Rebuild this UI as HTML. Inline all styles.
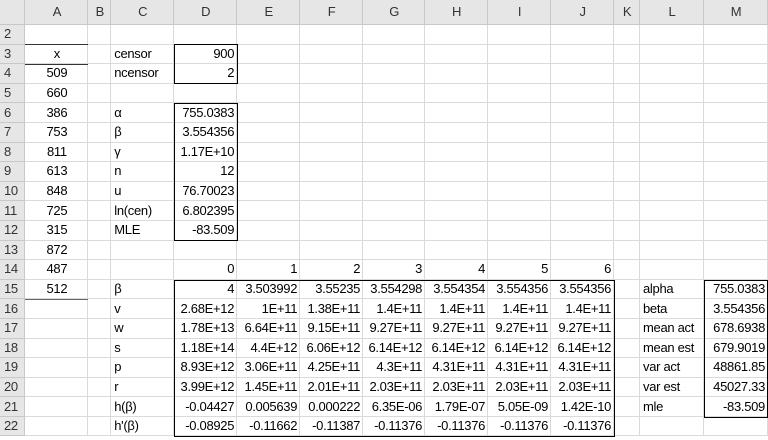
<!DOCTYPE html>
<html><head><meta charset="utf-8"><style>
body{margin:0;width:768px;height:440px;overflow:hidden;background:#fff;font-family:"Liberation Sans",sans-serif;font-size:13px;letter-spacing:-0.3px;color:#000;position:relative}
table{border-collapse:collapse;table-layout:fixed;position:absolute;left:0;top:0}
td{border-right:1px solid #dadada;border-bottom:1px solid #dadada;padding:0 2px 0 3px;white-space:nowrap;overflow:hidden;height:18.6px;line-height:18px;text-align:right}
tr.h td{background:#e6e6e6;color:#333;text-align:center;height:24px;border-right:1px solid #c8c8c8;border-bottom:1px solid #c8c8c8;font-size:13px}
td.r{background:#e6e6e6;color:#333;text-align:left;padding-left:4px;border-right:1px solid #c8c8c8;border-bottom:1px solid #c8c8c8}
td.c{text-align:center}
td.l{text-align:left}
.b{position:absolute;border:1px solid #000;box-sizing:border-box}
.ln{position:absolute;height:1px;background:#333}
</style></head><body>
<table>
<colgroup><col style="width:25px"><col style="width:63px"><col style="width:23px"><col style="width:63px"><col style="width:63px"><col style="width:63px"><col style="width:63px"><col style="width:62px"><col style="width:63px"><col style="width:63px"><col style="width:63px"><col style="width:26px"><col style="width:64px"><col style="width:64px"></colgroup>
<tr class="h"><td></td><td>A</td><td>B</td><td>C</td><td>D</td><td>E</td><td>F</td><td>G</td><td>H</td><td>I</td><td>J</td><td>K</td><td>L</td><td>M</td></tr>
<tr><td class="r">2</td><td></td><td></td><td></td><td></td><td></td><td></td><td></td><td></td><td></td><td></td><td></td><td></td><td></td></tr>
<tr><td class="r">3</td><td class="c">x</td><td></td><td class="l">censor</td><td>900</td><td></td><td></td><td></td><td></td><td></td><td></td><td></td><td></td><td></td></tr>
<tr><td class="r">4</td><td class="c">509</td><td></td><td class="l">ncensor</td><td>2</td><td></td><td></td><td></td><td></td><td></td><td></td><td></td><td></td><td></td></tr>
<tr><td class="r">5</td><td class="c">660</td><td></td><td></td><td></td><td></td><td></td><td></td><td></td><td></td><td></td><td></td><td></td><td></td></tr>
<tr><td class="r">6</td><td class="c">386</td><td></td><td class="l">α</td><td>755.0383</td><td></td><td></td><td></td><td></td><td></td><td></td><td></td><td></td><td></td></tr>
<tr><td class="r">7</td><td class="c">753</td><td></td><td class="l">β</td><td>3.554356</td><td></td><td></td><td></td><td></td><td></td><td></td><td></td><td></td><td></td></tr>
<tr><td class="r">8</td><td class="c">811</td><td></td><td class="l">γ</td><td>1.17E+10</td><td></td><td></td><td></td><td></td><td></td><td></td><td></td><td></td><td></td></tr>
<tr><td class="r">9</td><td class="c">613</td><td></td><td class="l">n</td><td>12</td><td></td><td></td><td></td><td></td><td></td><td></td><td></td><td></td><td></td></tr>
<tr><td class="r">10</td><td class="c">848</td><td></td><td class="l">u</td><td>76.70023</td><td></td><td></td><td></td><td></td><td></td><td></td><td></td><td></td><td></td></tr>
<tr><td class="r">11</td><td class="c">725</td><td></td><td class="l">ln(cen)</td><td>6.802395</td><td></td><td></td><td></td><td></td><td></td><td></td><td></td><td></td><td></td></tr>
<tr><td class="r">12</td><td class="c">315</td><td></td><td class="l">MLE</td><td>-83.509</td><td></td><td></td><td></td><td></td><td></td><td></td><td></td><td></td><td></td></tr>
<tr><td class="r">13</td><td class="c">872</td><td></td><td></td><td></td><td></td><td></td><td></td><td></td><td></td><td></td><td></td><td></td><td></td></tr>
<tr><td class="r">14</td><td class="c">487</td><td></td><td></td><td>0</td><td>1</td><td>2</td><td>3</td><td>4</td><td>5</td><td>6</td><td></td><td></td><td></td></tr>
<tr><td class="r">15</td><td class="c">512</td><td></td><td class="l">β</td><td>4</td><td>3.503992</td><td>3.55235</td><td>3.554298</td><td>3.554354</td><td>3.554356</td><td>3.554356</td><td></td><td class="l">alpha</td><td>755.0383</td></tr>
<tr><td class="r">16</td><td></td><td></td><td class="l">v</td><td>2.68E+12</td><td>1E+11</td><td>1.38E+11</td><td>1.4E+11</td><td>1.4E+11</td><td>1.4E+11</td><td>1.4E+11</td><td></td><td class="l">beta</td><td>3.554356</td></tr>
<tr><td class="r">17</td><td></td><td></td><td class="l">w</td><td>1.78E+13</td><td>6.64E+11</td><td>9.15E+11</td><td>9.27E+11</td><td>9.27E+11</td><td>9.27E+11</td><td>9.27E+11</td><td></td><td class="l">mean act</td><td>678.6938</td></tr>
<tr><td class="r">18</td><td></td><td></td><td class="l">s</td><td>1.18E+14</td><td>4.4E+12</td><td>6.06E+12</td><td>6.14E+12</td><td>6.14E+12</td><td>6.14E+12</td><td>6.14E+12</td><td></td><td class="l">mean est</td><td>679.9019</td></tr>
<tr><td class="r">19</td><td></td><td></td><td class="l">p</td><td>8.93E+12</td><td>3.06E+11</td><td>4.25E+11</td><td>4.3E+11</td><td>4.31E+11</td><td>4.31E+11</td><td>4.31E+11</td><td></td><td class="l">var act</td><td>48861.85</td></tr>
<tr><td class="r">20</td><td></td><td></td><td class="l">r</td><td>3.99E+12</td><td>1.45E+11</td><td>2.01E+11</td><td>2.03E+11</td><td>2.03E+11</td><td>2.03E+11</td><td>2.03E+11</td><td></td><td class="l">var est</td><td>45027.33</td></tr>
<tr><td class="r">21</td><td></td><td></td><td class="l">h(β)</td><td>-0.04427</td><td>0.005639</td><td>0.000222</td><td>6.35E-06</td><td>1.79E-07</td><td>5.05E-09</td><td>1.42E-10</td><td></td><td class="l">mle</td><td>-83.509</td></tr>
<tr><td class="r">22</td><td></td><td></td><td class="l">h'(β)</td><td>-0.08925</td><td>-0.11662</td><td>-0.11387</td><td>-0.11376</td><td>-0.11376</td><td>-0.11376</td><td>-0.11376</td><td></td><td></td><td></td></tr>
</table>
<div class="ln" style="left:25px;top:44px;width:63px"></div>
<div class="ln" style="left:25px;top:64px;width:63px"></div>
<div class="ln" style="left:25px;top:299px;width:63px;background:#666"></div>
<div class="b" style="left:174px;top:44px;width:64px;height:40px"></div>
<div class="b" style="left:174px;top:103px;width:64px;height:138px"></div>
<div class="b" style="left:174px;top:280px;width:441px;height:157px"></div>
<div class="b" style="left:704px;top:280px;width:64px;height:138px"></div>
</body></html>
